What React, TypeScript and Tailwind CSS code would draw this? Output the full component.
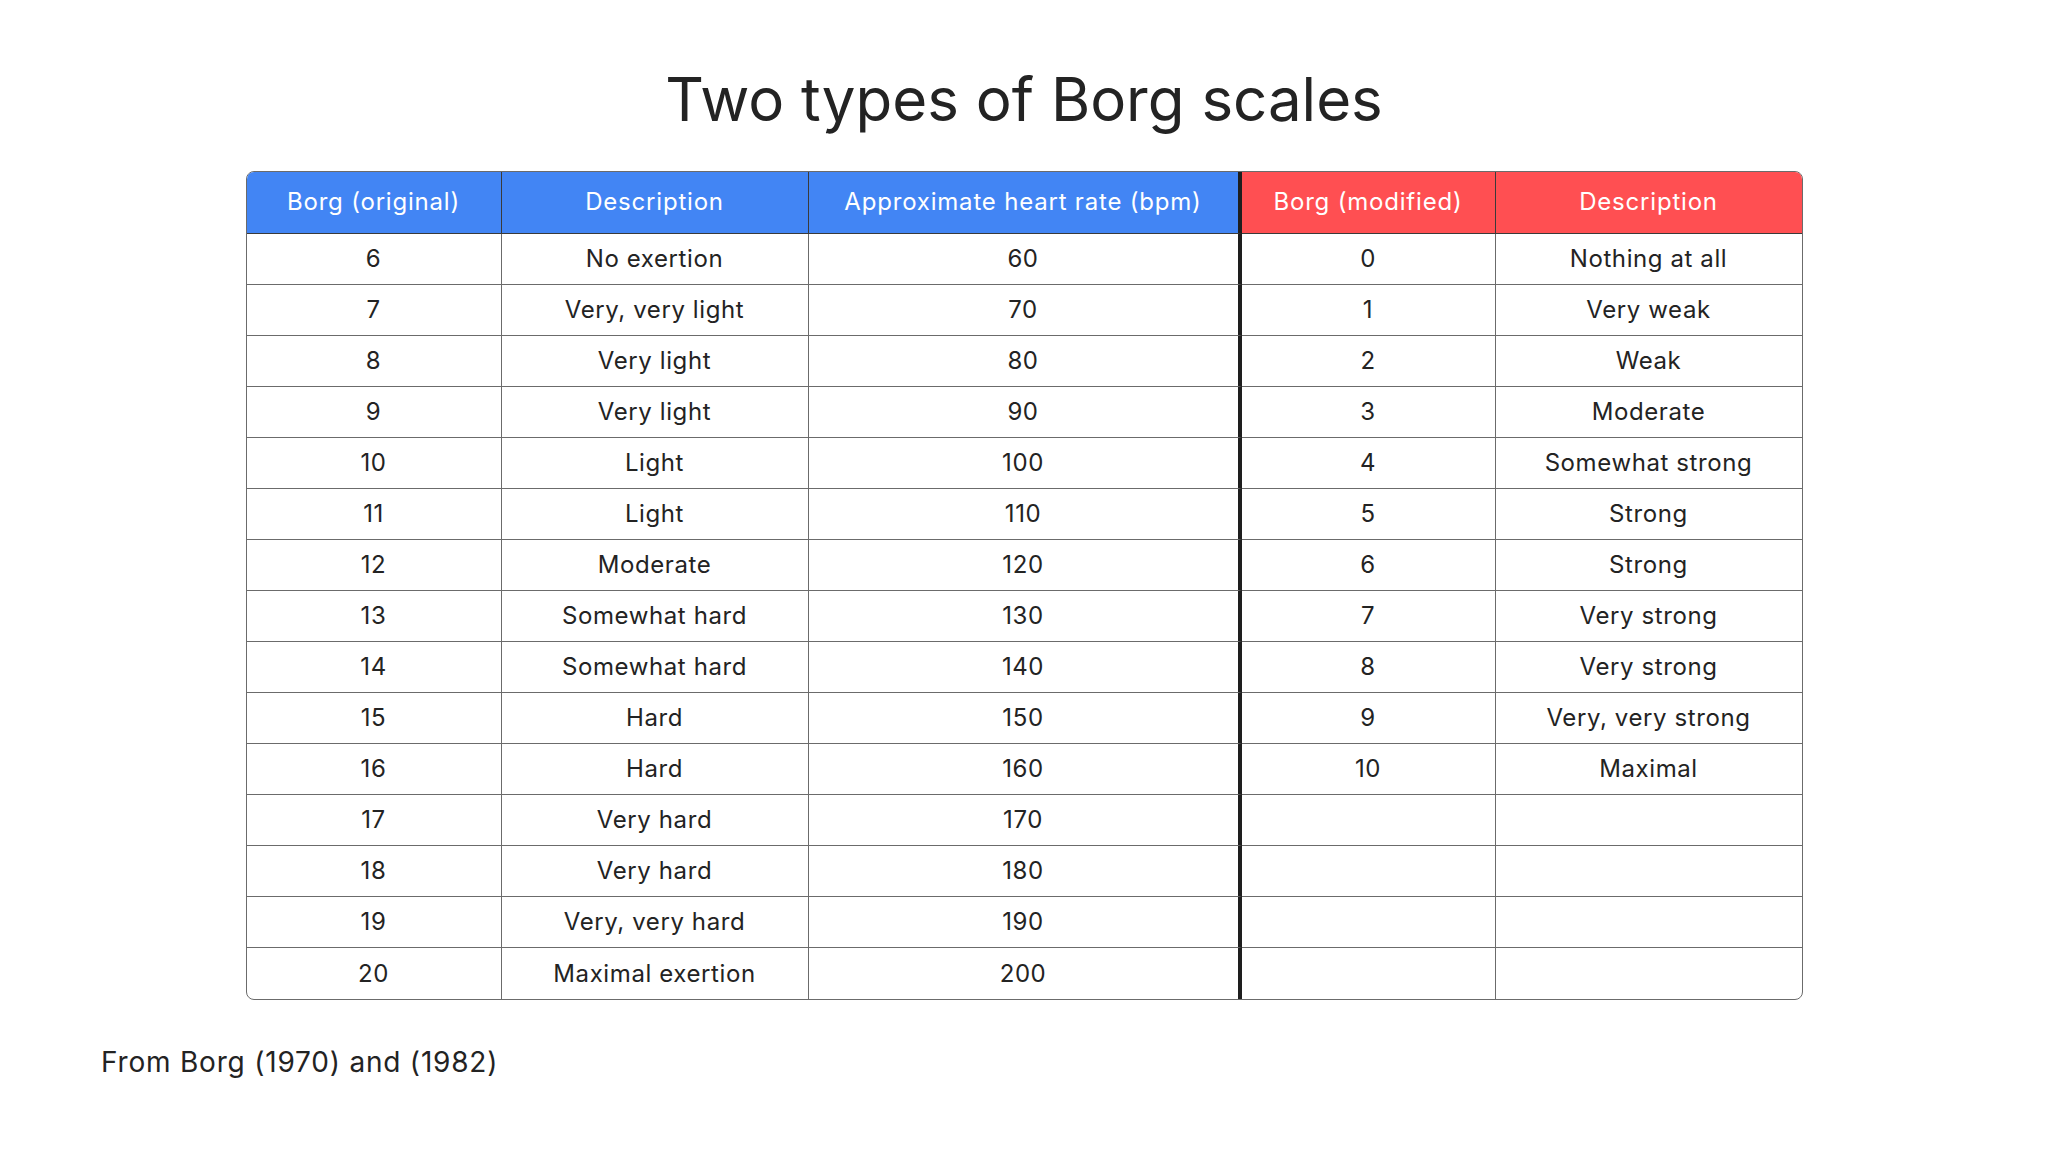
import React from 'react';

const original: [string, string, string][] = [
  ['6', 'No exertion', '60'],
  ['7', 'Very, very light', '70'],
  ['8', 'Very light', '80'],
  ['9', 'Very light', '90'],
  ['10', 'Light', '100'],
  ['11', 'Light', '110'],
  ['12', 'Moderate', '120'],
  ['13', 'Somewhat hard', '130'],
  ['14', 'Somewhat hard', '140'],
  ['15', 'Hard', '150'],
  ['16', 'Hard', '160'],
  ['17', 'Very hard', '170'],
  ['18', 'Very hard', '180'],
  ['19', 'Very, very hard', '190'],
  ['20', 'Maximal exertion', '200'],
];

const modified: [string, string][] = [
  ['0', 'Nothing at all'],
  ['1', 'Very weak'],
  ['2', 'Weak'],
  ['3', 'Moderate'],
  ['4', 'Somewhat strong'],
  ['5', 'Strong'],
  ['6', 'Strong'],
  ['7', 'Very strong'],
  ['8', 'Very strong'],
  ['9', 'Very, very strong'],
  ['10', 'Maximal'],
];

const headCell = 'flex items-center justify-center h-[62px] pb-[2px] border-b border-[#3a3a3a] text-white tracking-[0.8px]';
const cell = 'flex items-center justify-center h-[51px] border-[#6b6b6b] tracking-[0.6px]';

export default function App() {
  return (
    <div className="w-[2048px] h-[1149px] bg-white text-[#232323] font-['Inter',sans-serif] flex flex-col">
      <h1 className="mt-[63px] text-center text-[60px] leading-[72px] font-normal">Two types of Borg scales</h1>

      <div className="mt-[36px] mx-auto w-[1557px] border border-[#6b6b6b] rounded-[8px] overflow-hidden text-[24px]">
        <div className="grid grid-cols-[255px_307px_433px_254px_306px]">
          <div className={`${headCell} bg-[#4285f4] border-r border-r-[#3a3a3a]`}>Borg (original)</div>
          <div className={`${headCell} bg-[#4285f4] border-r border-r-[#3a3a3a]`}>Description</div>
          <div className={`${headCell} bg-[#4285f4] border-r-4 border-r-[#1e1e1e]`}>Approximate heart rate (bpm)</div>
          <div className={`${headCell} bg-[#ff4f52] border-r border-r-[#3a3a3a]`}>Borg (modified)</div>
          <div className={`${headCell} bg-[#ff4f52]`}>Description</div>

          {original.map((r, i) => {
            const last = i === original.length - 1;
            const b = last ? '' : 'border-b';
            const m = modified[i];
            return (
              <React.Fragment key={i}>
                <div className={`${cell} ${b} border-r`}>{r[0]}</div>
                <div className={`${cell} ${b} border-r`}>{r[1]}</div>
                <div className={`${cell} ${b} border-r-4 border-r-[#1e1e1e]`}>{r[2]}</div>
                <div className={`${cell} ${b} border-r`}>{m ? m[0] : ''}</div>
                <div className={`${cell} ${b}`}>{m ? m[1] : ''}</div>
              </React.Fragment>
            );
          })}
        </div>
      </div>

      <p className="mt-[45px] pl-[101px] text-[28px] leading-[34px] tracking-[0.8px]">From Borg (1970) and (1982)</p>
    </div>
  );
}
